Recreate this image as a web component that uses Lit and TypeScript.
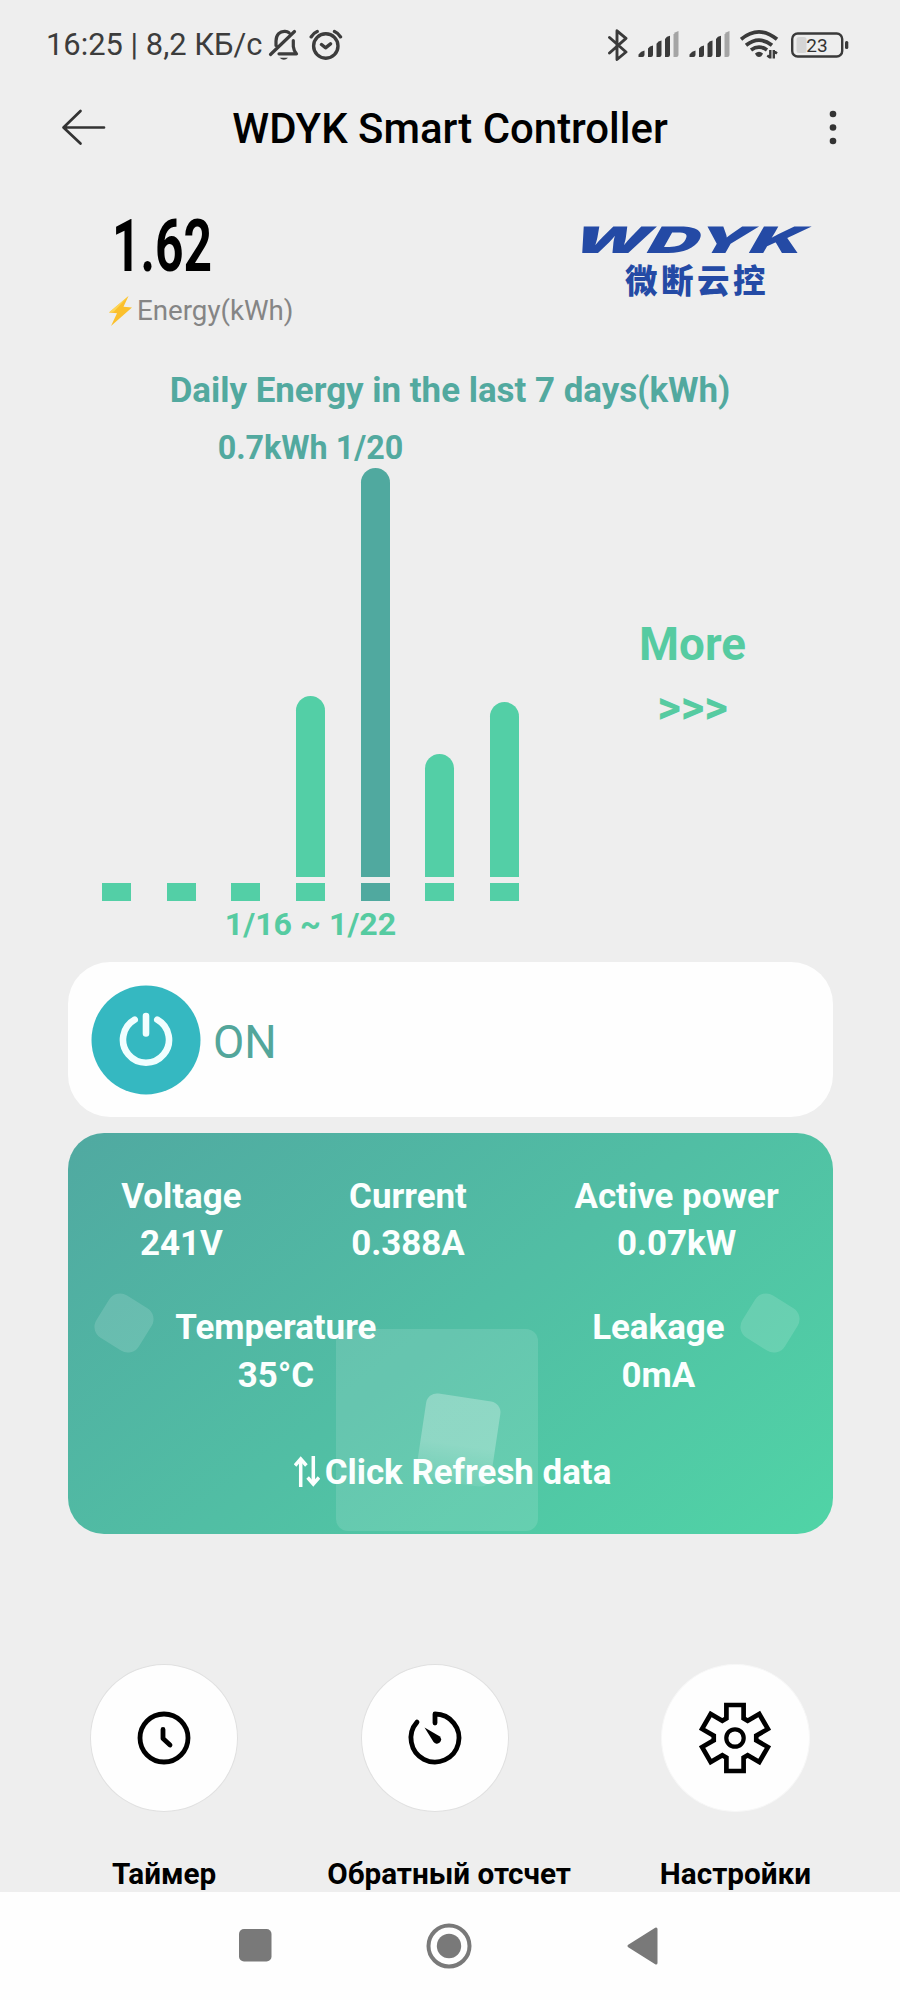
import { LitElement, html, css, svg } from "lit";
import { customElement } from "lit/decorators.js";
import { styleMap } from "lit/directives/style-map.js";
import { classMap } from "lit/directives/class-map.js";

const DAYS = [
  { kwh: 0, height: 0 },
  { kwh: 0, height: 0 },
  { kwh: 0, height: 0 },
  { kwh: 0.39, height: 181 },
  { kwh: 0.7, height: 409 },
  { kwh: 0.29, height: 123 },
  { kwh: 0.38, height: 175.5 },
];

const gearPath = (): string => {
  const pts: string[] = [];
  for (let i = 0; i < 6; i++) {
    const a = (i * Math.PI) / 3;
    for (const [x, y] of [[-8.6, -19.6], [-8.6, -33], [8.6, -33], [8.6, -19.6]]) {
      const px = x * Math.cos(a) - y * Math.sin(a);
      const py = x * Math.sin(a) + y * Math.cos(a);
      pts.push(`${px.toFixed(2)},${py.toFixed(2)}`);
    }
  }
  return `M${pts.join("L")}Z`;
};

const signalBars = svg`
  <path d="M0.500 26 V23.500 Q3 20.200 6.500 19.500 V24 Q6.300 26 4.500 26Z M10 26 V17.500 Q11.500 14.800 15 14.500 V24 Q14.800 26 13 26Z M18.500 26 V12.800 Q20 10 23.500 9.500 V24 Q23.300 26 21.500 26Z M27 26 V8 Q28.500 5.200 32 4.800 V24 Q31.800 26 30 26Z" fill="#3a3a3a"/>
  <path d="M35.500 26 V3.500 Q37 .6 40.500 0 V24 Q40.300 26 38.500 26Z" fill="#a5a5a5"/>`;

@customElement("status-bar")
export class StatusBar extends LitElement {
  static styles = css`
    :host { display: flex; align-items: center; height: 89px; margin-bottom: -1px; padding: 0 51px 0 46px; color: #3c3c3c; }
    .clock { font-size: 30.900px; line-height: 40px; white-space: nowrap; }
    .left { display: flex; align-items: center; flex: 1; }
    .right { display: flex; align-items: center; }
    svg { display: block; }
    .bell { margin-left: 5px; }
    .alarm { margin-left: 10.500px; }
    .sig { margin-left: 10px; }
    .wifi { margin-left: 10px; }
    .battery { margin-left: 12px; }
  `;
  render() {
    return html`
      <div class="left">
        <span class="clock">16:25 | 8,2 КБ/с</span>
        <svg class="bell" width="31" height="32" viewBox="268 28 31 32" fill="none" stroke="#3c3c3c" stroke-width="3.2" stroke-linecap="round" stroke-linejoin="round">
          <path d="M276 44.500V40C276 33.500 280 30 285 30.300Q287.500 30.500 289 31.700M293.300 39.500V45.500Q293.800 50 296.500 52.800H279M270.500 53.500L294.500 30.500"/>
          <path d="M279.500 56.700H288Q284 61 279.500 56.700Z" fill="#3c3c3c" stroke="none"/>
        </svg>
        <svg class="alarm" width="34" height="32" viewBox="309.500 27 34 32" fill="none" stroke="#3c3c3c" stroke-width="3.400" stroke-linecap="round" stroke-linejoin="round">
          <circle cx="326.300" cy="44" r="12.200"/>
          <path d="M311.700 34.800Q314 31 317.700 29.500M341 34.800Q338.700 31 335 29.500M322 42.500L326 45.800L331 41.800"/>
        </svg>
      </div>
      <div class="right">
        <svg width="21" height="34" viewBox="607 26 21 34" fill="none" stroke="#3a3a3a" stroke-width="2.900" stroke-linejoin="round" stroke-linecap="round">
          <path d="M609.500 35.500L626 50L617 57.500V28.800L626 36.300L609.500 51"/>
        </svg>
        <svg class="sig" width="41" height="27" viewBox="0 0 41 27">${signalBars}</svg>
        <svg class="sig" width="41" height="27" viewBox="0 0 41 27">${signalBars}</svg>
        <svg class="wifi" width="39" height="31" viewBox="740 29 39 31" fill="none" stroke="#3a3a3a" stroke-width="3.800">
          <path d="M741 39.300Q759 24.500 777 39.300M746 45.300Q759 35 772 45.300M751 50Q759 44.300 767 50"/>
          <path d="M755 53.500Q759 50.200 763 53.500Q761.500 57 759 57Q756.500 57 755 53.500Z" fill="#3a3a3a" stroke="none"/>
          <path d="M770.300 50V58.500M773.800 58.500V50M767.300 55.500L770 57.500M774 51L777 53.500" stroke-width="2.400"/>
        </svg>
        <svg class="battery" width="58" height="26" viewBox="791 30.500 58 26">
          <rect x="792.200" y="32" width="50" height="23" rx="5.500" fill="none" stroke="#3a3a3a" stroke-width="2.400"/>
          <rect x="796.500" y="35.500" width="10" height="16" rx="2.500" fill="#d5d5d5"/>
          <rect x="845" y="39.500" width="3.300" height="8" rx="1.500" fill="#3a3a3a"/>
          <text x="817" y="50.800" font-size="19" fill="#333" text-anchor="middle">23</text>
        </svg>
      </div>`;
  }
}

@customElement("title-bar")
export class TitleBar extends LitElement {
  static styles = css`
    :host { display: grid; grid-template-columns: 46px 1fr 46px; align-items: center; height: 80px; padding: 0 62px 0 61px; }
    .title { font-size: 41.900px; font-weight: 500; line-height: 56px; color: #000; white-space: nowrap; text-align: center; padding: 1px 0 0 1px; }
    .menu { justify-self: end; }
    svg { display: block; }
  `;
  render() {
    return html`
      <svg width="46" height="38" viewBox="0 0 46 38" fill="none" stroke="#333" stroke-width="2.700" stroke-linecap="round" stroke-linejoin="round">
        <path d="M43 18.500H3M19.500 2L2.500 18.500L19.500 34.500"/>
      </svg>
      <span class="title">WDYK Smart Controller</span>
      <svg class="menu" width="10" height="38" viewBox="0 0 10 38" fill="#333">
        <circle cx="5" cy="5" r="3.300"/><circle cx="5" cy="18.500" r="3.300"/><circle cx="5" cy="32" r="3.300"/>
      </svg>`;
  }
}

@customElement("energy-summary")
export class EnergySummary extends LitElement {
  static styles = css`
    :host { display: flex; justify-content: space-between; padding: 42px 88px 0 106px; height: 121px; }
    .total { font-size: 72px; line-height: 73px; font-weight: 700; color: #000; transform: scaleX(.69); transform-origin: left; margin-left: 6px; width: 150px; }
    .label { display: flex; align-items: center; margin-top: 8px; font-size: 27.700px; line-height: 40px; color: #858585; }
    .label svg { margin-right: 4px; }
    .brand { margin-top: 12px; width: 234px; display: flex; flex-direction: column; align-items: center; color: #244aa5; }
    .cn { font: 900 32.500px/40px "Noto Sans CJK SC", sans-serif; letter-spacing: 3.500px; margin-top: 3px; margin-left: 4px; white-space: nowrap; }
    svg { display: block; }
    .word { overflow: visible; }
  `;
  render() {
    return html`
      <div>
        <div class="total">1.62</div>
        <div class="label">
          <svg width="27" height="32" viewBox="0 0 27 32"><path d="M22.500 1L3 17.500L11 18.300L5 31L26 12.500L17.500 11.700Z" fill="#fbc02d"/><path d="M22.500 1L3 17.500L8 16.500Z" fill="#fdd657"/></svg>
          <span>Energy(kWh)</span>
        </div>
      </div>
      <div class="brand">
        <svg class="word" width="234" height="34" viewBox="0 0 234 34">
          <text x="2" y="31" transform="translate(-2 0) skewX(-14)" textLength="232" lengthAdjust="spacingAndGlyphs" font-family="Inter, sans-serif" font-size="36.500" font-weight="900" font-style="italic" fill="#244aa5">WDYK</text>
        </svg>
        <span class="cn">微断云控</span>
      </div>`;
  }
}

@customElement("energy-chart")
export class EnergyChart extends LitElement {
  static styles = css`
    :host { display: block; padding: 36px 0 0; font-weight: 700; }
    .heading { text-align: center; font-size: 34.900px; line-height: 48px; color: #52a99f; white-space: nowrap; }
    .body { display: flex; margin: 13px 0 0 102px; }
    .plot { width: 417px; text-align: center; }
    .peak { font-size: 32.300px; line-height: 40px; color: #52a99f; }
    .bars { display: flex; justify-content: space-between; align-items: flex-end; height: 433px; }
    .day { width: 29px; color: #53cfa6; }
    .day.active { color: #50a99f; }
    .bar { background: currentColor; border-radius: 14.500px 14.500px 0 0; margin-bottom: 5.500px; }
    .foot { background: currentColor; height: 18.500px; }
    .range { font-size: 32.200px; line-height: 47px; margin-bottom: 1px; color: #56cba1; }
    .more { width: 347px; padding-top: 185px; text-align: center; color: #56cba1; font-size: 45.700px; line-height: 63px; }
  `;
  render() {
    const peak = Math.max(...DAYS.map((d) => d.kwh));
    return html`
      <div class="heading">Daily Energy in the last 7 days(kWh)</div>
      <div class="body">
        <div class="plot">
          <div class="peak">0.7kWh 1/20</div>
          <div class="bars">
            ${DAYS.map((d) => html`
              <div class=${classMap({ day: true, active: d.kwh === peak })}>
                ${d.height ? html`<div class="bar" style=${styleMap({ height: `${d.height}px` })}></div>` : ""}
                <div class="foot"></div>
              </div>`)}
          </div>
          <div class="range">1/16 ~ 1/22</div>
        </div>
        <div class="more"><div>More</div><div>&gt;&gt;&gt;</div></div>
      </div>`;
  }
}

@customElement("power-card")
export class PowerCard extends LitElement {
  static styles = css`
    :host { display: flex; align-items: center; height: 155.500px; margin: 12.500px 67.500px 0; padding: 1px 0 0 23.500px; box-sizing: border-box; background: #fefefe; border-radius: 42px; }
    svg { display: block; }
    .state { font-size: 45.500px; line-height: 60px; color: #53a69b; margin: 7px 0 0 12px; }
  `;
  render() {
    return html`
      <svg width="110" height="110" viewBox="-55 -55 110 110" fill="none" stroke="#f0feff" stroke-width="6.600" stroke-linecap="round">
        <circle r="54.500" fill="#35b8c1" stroke="none"/>
        <path d="M-11.300 -20.300A23 23 0 1 0 11.300 -20.300M0 -24V-6.500"/>
      </svg>
      <span class="state">ON</span>`;
  }
}

@customElement("metrics-card")
export class MetricsCard extends LitElement {
  static styles = css`
    :host { display: block; position: relative; overflow: hidden; height: 400.500px; margin: 16px 67.500px 0; box-sizing: border-box; padding-top: 39.500px; border-radius: 36px; background: linear-gradient(142deg, #50a9a1 0%, #51bea4 50%, #50d4a6 100%); color: #fbfffe; font-weight: 700; font-size: 34.900px; line-height: 47.500px; text-align: center; }
    .row { display: flex; justify-content: space-around; position: relative; }
    .row + .row { margin-top: 36.500px; }
    .refresh { display: flex; justify-content: center; align-items: center; position: relative; margin-top: 49.500px; padding-left: 5px; white-space: nowrap; }
    .refresh svg { margin-right: 5px; }
    .deco { position: absolute; background: rgba(255, 255, 255, .14); }
    .tile { width: 50px; height: 50px; border-radius: 13px; transform: rotate(32deg); top: 165px; }
    .tile.a { left: 31.500px; }
    .tile.b { left: 677px; }
    .panel { left: 268.500px; top: 196px; width: 201.500px; height: 202px; border-radius: 12px; background: rgba(255, 255, 255, .12); }
    .sheet { left: 353px; top: 264px; width: 75px; height: 86px; border-radius: 11px; transform: rotate(8.500deg); background: linear-gradient(rgba(255, 255, 255, .27) 55%, rgba(255, 255, 255, .08)); }
  `;
  private metric(label: string, value: string) {
    return html`<div><div>${label}</div><div>${value}</div></div>`;
  }
  render() {
    return html`
      <div class="deco tile a"></div>
      <div class="deco tile b"></div>
      <div class="deco panel"></div>
      <div class="deco sheet"></div>
      <div class="row">
        ${this.metric("Voltage", "241V")}
        ${this.metric("Current", "0.388A")}
        ${this.metric("Active power", "0.07kW")}
      </div>
      <div class="row">
        ${this.metric("Temperature", "35°C")}
        ${this.metric("Leakage", "0mA")}
      </div>
      <div class="refresh">
        <svg width="26" height="32" viewBox="0 0 26 32" fill="none" stroke="#fbfffe" stroke-width="3.500">
          <path d="M6.700 31V4M19.300 0V27"/>
          <path d="M1 9.500L6.700 3L12.400 9.500M13.600 21.500L19.300 28L25 21.500"/>
        </svg>
        <span>Click Refresh data</span>
      </div>`;
  }
}

@customElement("action-row")
export class ActionRow extends LitElement {
  static styles = css`
    :host { display: flex; justify-content: space-evenly; margin-top: 130px; height: 228px; padding-left: 1px; }
    .item { display: flex; flex-direction: column; align-items: center; }
    .disc { width: 148.500px; height: 148.500px; box-sizing: border-box; border-radius: 50%; background: #fefefe; border: 1.500px solid #e0e0e0; display: flex; align-items: center; justify-content: center; }
    .disc.plain { border-color: #f7f7f7; }
    .item.shift .disc { margin-right: 28px; }
    .caption { margin-top: 44px; font-size: 29.700px; line-height: 36px; font-weight: 700; color: #000; white-space: nowrap; }
    svg { display: block; }
  `;
  render() {
    return html`
      <div class="item">
        <div class="disc">
          <svg width="76" height="76" viewBox="-38 -38 76 76" fill="none" stroke="#000" stroke-width="4.800" stroke-linecap="round">
            <circle r="24"/><path d="M-1 -8.500V.5L6 7" stroke-linejoin="round"/>
          </svg>
        </div>
        <div class="caption">Таймер</div>
      </div>
      <div class="item shift">
        <div class="disc">
          <svg width="76" height="76" viewBox="-38 -38 76 76" fill="none" stroke="#000" stroke-width="4.800" stroke-linecap="round" stroke-linejoin="round">
            <path d="M0 -15V-24A24 24 0 1 1 -18 -15.900"/>
            <path d="M-10.500 -10.500L4.500 -1.800A4.200 4.200 0 1 1 -1.600 3.800Z" fill="#000" stroke="none"/>
          </svg>
        </div>
        <div class="caption">Обратный отсчет</div>
      </div>
      <div class="item">
        <div class="disc plain">
          <svg width="76" height="76" viewBox="-38 -38 76 76" fill="none" stroke="#000" stroke-width="4.700">
            <path d=${gearPath()}/><circle r="8.700" stroke-width="4.200"/>
          </svg>
        </div>
        <div class="caption">Настройки</div>
      </div>`;
  }
}

@customElement("system-nav")
export class SystemNav extends LitElement {
  static styles = css`
    :host { display: flex; align-items: center; flex: 1; background: #fefefe; padding-left: 239px; }
    svg { display: block; }
    .home { margin-left: 154px; }
    .back { margin-left: 155px; }
  `;
  render() {
    return html`
      <svg width="33" height="33" viewBox="0 0 33 33"><rect width="32.500" height="32.500" rx="5" fill="#797979"/></svg>
      <svg class="home" width="46" height="46" viewBox="-23 -23 46 46" fill="#797979"><circle r="20.500" fill="none" stroke="#797979" stroke-width="4"/><circle r="12.200"/></svg>
      <svg class="back" width="31" height="38" viewBox="0 0 31 38"><path d="M2 19L29 2V36Z" fill="#797979" stroke="#797979" stroke-width="3" stroke-linejoin="round"/></svg>`;
  }
}

@customElement("app-root")
export class AppRoot extends LitElement {
  static styles = css`
    :host { display: flex; flex-direction: column; width: 900px; height: 2000px; overflow: hidden; background: #eee; font-family: Roboto, "Noto Sans", sans-serif; }
  `;
  render() {
    return html`
      <status-bar></status-bar>
      <title-bar></title-bar>
      <energy-summary></energy-summary>
      <energy-chart></energy-chart>
      <power-card></power-card>
      <metrics-card></metrics-card>
      <action-row></action-row>
      <system-nav></system-nav>`;
  }
}
